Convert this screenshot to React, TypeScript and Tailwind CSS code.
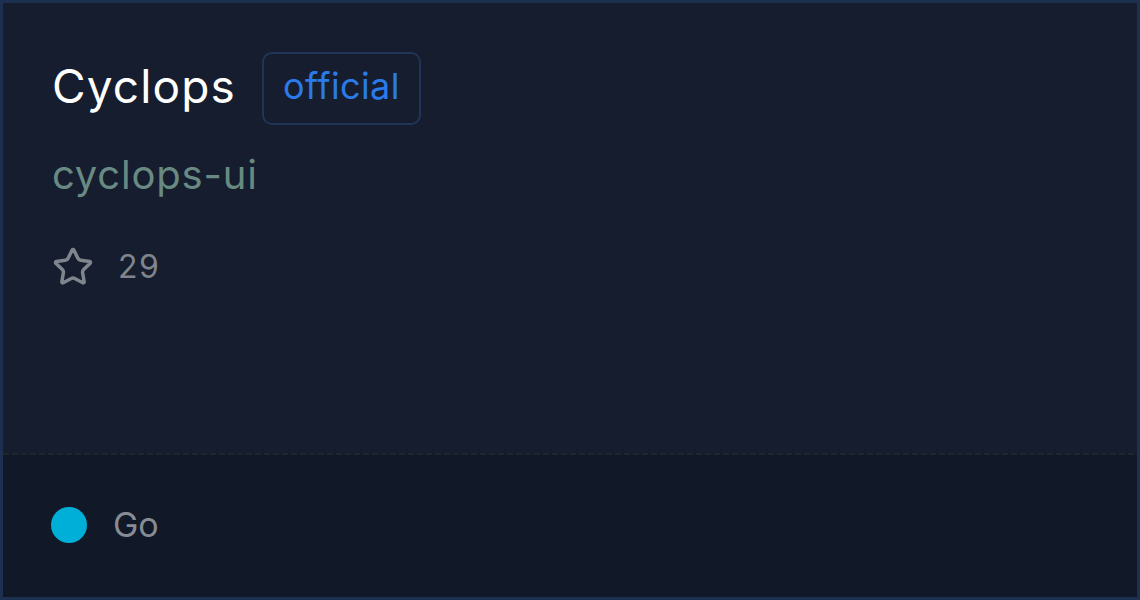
import React from "react";

function Star() {
  return (
    <svg width="42" height="42" viewBox="0 0 24 24" fill="none" stroke="currentColor" strokeWidth="2" strokeLinecap="round" strokeLinejoin="round">
      <path d="M11.525 2.295a.53.53 0 0 1 .95 0l2.31 4.679a2.123 2.123 0 0 0 1.595 1.16l5.166.756a.53.53 0 0 1 .294.904l-3.736 3.638a2.123 2.123 0 0 0-.611 1.878l.882 5.14a.53.53 0 0 1-.771.56l-4.618-2.428a2.122 2.122 0 0 0-1.973 0L6.396 21.01a.53.53 0 0 1-.77-.56l.881-5.139a2.122 2.122 0 0 0-.611-1.879L2.16 9.795a.53.53 0 0 1 .294-.906l5.165-.755a2.122 2.122 0 0 0 1.597-1.16z" />
    </svg>
  );
}

export default function App() {
  return (
    <div className="w-[1140px] h-[600px] border-[3px] border-[#1e3050] bg-[#151d2e] flex flex-col" style={{ fontFamily: "Inter, 'Noto Sans', sans-serif" }}>
      <div className="flex-1 pl-[49px] pt-[49px]">
        <div className="flex items-center gap-[26px]">
          <span className="text-[46px] leading-[69px] mb-[4px] tracking-[0.025em] text-white">Cyclops</span>
          <span className="h-[73px] pl-[19px] pr-[19px] pb-[5px] border-2 border-[#213558] rounded-[10px] flex items-center text-[36px] tracking-[0.01em] text-[#2b7ae9]">official</span>
        </div>
        <div className="mt-[26px] text-[40px] leading-[48px] tracking-[0.02em] text-[#688a82]">cyclops-ui</div>
        <div className="mt-[47px] flex items-center gap-[24px] text-[#80858d]">
          <Star />
          <span className="text-[32px] leading-[40px] tracking-[0.05em]">29</span>
        </div>
      </div>
      <div className="h-[2px] bg-[linear-gradient(to_right,#1d2729_6px,transparent_6px)] bg-[length:9px_2px] bg-[#131c2b]"></div>
      <div className="h-[142px] bg-[#111827] pl-[48px] pb-[3px] flex items-center gap-[26px]">
        <span className="w-[36px] h-[36px] rounded-full bg-[#00afd8]"></span>
        <span className="text-[34px] text-[#878b93]">Go</span>
      </div>
    </div>
  );
}
